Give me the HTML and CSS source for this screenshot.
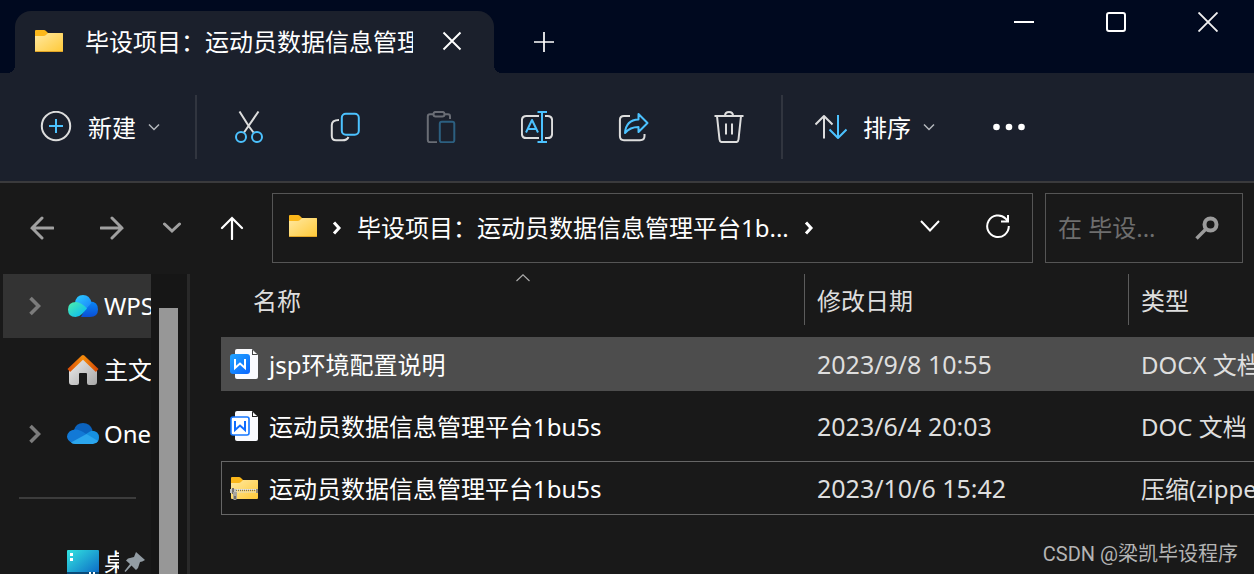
FILE: index.html
```html
<!DOCTYPE html>
<html lang="zh-CN">
<head>
    <meta charset="UTF-8">
    <title>毕设项目</title>
    <meta name="viewport" content="width=device-width, initial-scale=1.0">
    <link rel="stylesheet" href="styles.css">
</head>
<body>
    <!-- shared shapes -->
    <svg class="defs" width="0" height="0" aria-hidden="true">
        <defs>
            <linearGradient id="gFolder" x1="0" y1="0" x2="1" y2="1">
                <stop offset="0" stop-color="#ffe9a2"/>
                <stop offset="1" stop-color="#ffc937"/>
            </linearGradient>
            <linearGradient id="gTeal" x1="0" y1="0" x2="1" y2="1">
                <stop offset="0" stop-color="#4ff0a8"/>
                <stop offset="1" stop-color="#00b4ff"/>
            </linearGradient>
            <linearGradient id="gSky" x1="0" y1="0" x2="1" y2="1">
                <stop offset="0" stop-color="#2cd0ff"/>
                <stop offset="1" stop-color="#1a7dfa"/>
            </linearGradient>
            <linearGradient id="gBlue" x1="0" y1="0" x2="0" y2="1">
                <stop offset="0" stop-color="#0a86f5"/>
                <stop offset="1" stop-color="#0a4fd6"/>
            </linearGradient>
            <linearGradient id="gRoof" x1="0" y1="0" x2="1" y2="0">
                <stop offset="0" stop-color="#dc5208"/>
                <stop offset="0.5" stop-color="#f58d0c"/>
                <stop offset="1" stop-color="#d64a06"/>
            </linearGradient>
            <linearGradient id="gHouse" x1="0" y1="0" x2="1" y2="1">
                <stop offset="0" stop-color="#f0f0f0"/>
                <stop offset="1" stop-color="#a8a8a8"/>
            </linearGradient>
            <linearGradient id="gDesk" x1="0" y1="0" x2="1" y2="1">
                <stop offset="0" stop-color="#32e4e0"/>
                <stop offset="1" stop-color="#0a63c4"/>
            </linearGradient>
            <linearGradient id="gWps" x1="0" y1="0" x2="1" y2="1">
                <stop offset="0" stop-color="#22a5ff"/>
                <stop offset="1" stop-color="#0a66ff"/>
            </linearGradient>
            <symbol id="folder" viewBox="0 0 28 24">
                <path d="M0 2Q0 1 1 1H9Q10 1 11 2L13 4H27Q28 4 28 5V10H0Z" fill="#fbb71a"/>
                <path d="M0 7H8.500Q10 7 11 6L13 4H27Q28 4 28 5V22Q28 23 27 23H1Q0 23 0 22Z" fill="url(#gFolder)"/>
                <path d="M0 21.500V22Q0 23 1 23H27Q28 23 28 22V21.500Q28 22 27 22H1Q0 22 0 21.500Z" fill="#e2a526"/>
            </symbol>
            <symbol id="chev-down" viewBox="0 0 12 8">
                <path d="M1 1.500L6 6.500L11 1.500" fill="none" stroke="#b5b8be" stroke-width="1.500"/>
            </symbol>
            <symbol id="chev-bold" viewBox="0 0 12 14">
                <path d="M3 1.500L8 7L3 12.500" fill="none" stroke="#fff" stroke-width="3"/>
            </symbol>
            <symbol id="chev-tree" viewBox="0 0 14 20">
                <path d="M3.500 2L11.500 10L3.500 18" fill="none" stroke="#7c7c7c" stroke-width="3.600"/>
            </symbol>
        </defs>
    </svg>

    <header class="titlebar">
        <div class="tab">
            <svg class="folder" aria-hidden="true"><use href="#folder"/></svg>
            <span class="tab-title">毕设项目：运动员数据信息管理平台1bu5s</span>
            <button class="tab-close" aria-label="关闭标签页">
                <svg width="20" height="20" viewBox="0 0 20 20"><path d="M1.500 1.500L18.500 18.500M18.500 1.500L1.500 18.500" fill="none" stroke="#fff" stroke-width="1.900"/></svg>
            </button>
        </div>
        <button class="tab-add" aria-label="新标签页">
            <svg width="20" height="20" viewBox="0 0 20 20"><path d="M10 0V20M0 10H20" fill="none" stroke="#fff" stroke-width="1.700"/></svg>
        </button>
        <div class="window-buttons">
            <button aria-label="最小化"><svg width="20" height="20" viewBox="0 0 20 20"><path d="M0 10H20" stroke="#fff" stroke-width="2"/></svg></button>
            <button aria-label="最大化"><svg width="20" height="20" viewBox="0 0 20 20"><rect x="1" y="1" width="18" height="18" rx="2" fill="none" stroke="#fff" stroke-width="2"/></svg></button>
            <button aria-label="关闭"><svg width="20" height="20" viewBox="0 0 20 20"><path d="M0.500 0.500L19.500 19.500M19.500 0.500L0.500 19.500" fill="none" stroke="#f0f0f0" stroke-width="1.900"/></svg></button>
        </div>
    </header>

    <div class="toolbar">
        <button class="tool-text">
            <svg class="tool-icon" viewBox="0 0 32 32" aria-hidden="true">
                <circle cx="16" cy="15" r="14.200" stroke="#ddd"/>
                <path d="M16 8V22M9 15H23" stroke="#4cc2ff"/>
            </svg>
            <span class="tool-label">新建</span>
            <svg class="chev" aria-hidden="true"><use href="#chev-down"/></svg>
        </button>
        <span class="divider"></span>
        <button class="tool" aria-label="剪切">
            <svg class="tool-icon" viewBox="0 0 32 32">
                <path d="M6.500 0.500L16 15.500L20.500 21.500M25.500 0.500L11 21.500" stroke="#ddd"/>
                <circle cx="8" cy="26" r="5" stroke="#4cc2ff"/>
                <circle cx="24" cy="26" r="5" stroke="#4cc2ff"/>
            </svg>
        </button>
        <button class="tool" aria-label="复制">
            <svg class="tool-icon" viewBox="0 0 32 32">
                <path d="M10 9Q2.800 9 2.800 14V25Q2.800 29.300 7 29.300H13.500Q18 29.300 19.500 26" stroke="#ddd"/>
                <rect x="12.800" y="2.800" width="17" height="21" rx="4" stroke="#4cc2ff"/>
            </svg>
        </button>
        <button class="tool disabled" aria-label="粘贴" disabled>
            <svg class="tool-icon" viewBox="0 0 32 32">
                <path d="M8 3.200H5Q2.800 3.200 2.800 5.500V29Q2.800 31.200 5 31.200H12M19 3.200H23Q25 3.200 25 5.500V8" stroke="#6a6d75"/>
                <rect x="8.500" y="0.900" width="11" height="4.500" rx="2.200" stroke="#6a6d75"/>
                <rect x="14.800" y="10.800" width="14.500" height="20.400" rx="2" stroke="#2c5f80"/>
            </svg>
        </button>
        <button class="tool" aria-label="重命名">
            <svg class="tool-icon" viewBox="0 0 32 32">
                <path d="M18 4.900H5.500Q0.900 4.900 0.900 9.500V22.500Q0.900 27.100 5.500 27.100H18M24 4.900H26.500Q31.100 4.900 31.100 9.500V22.500Q31.100 27.100 26.500 27.100H24" stroke="#ddd"/>
                <path d="M21 1V31M16.500 0.900H26M16.500 31.100H26M5 21.500L11 9L17 21.500M7.500 18H14.500" stroke="#4cc2ff"/>
            </svg>
        </button>
        <button class="tool" aria-label="共享">
            <svg class="tool-icon" viewBox="0 0 32 32">
                <path d="M13 4.900H7Q2.900 4.900 2.900 9V25Q2.900 29.200 7 29.200H23Q27.500 29.200 27.500 25V23" stroke="#ddd"/>
                <path d="M21.500 3L30.500 12L21.500 21V16Q13 16 8 22Q9 9 21.500 8.500Z" stroke="#4cc2ff"/>
            </svg>
        </button>
        <button class="tool" aria-label="删除">
            <svg class="tool-icon" viewBox="0 0 32 32">
                <path d="M1.500 5H30.500M12 5Q12 1 16 1T20 5M4 5L6.500 28.500Q6.800 31.100 9 31.100H23Q25.200 31.100 25.500 28.500L28 5M13 12.500V23.500M19 12.500V23.500" stroke="#ddd"/>
            </svg>
        </button>
        <span class="divider"></span>
        <button class="tool-text sort">
            <svg class="tool-icon" viewBox="0 0 32 32" aria-hidden="true">
                <path d="M9 27.500V5M0.500 13.500L9 5L17.500 13.500" stroke="#ddd"/>
                <path d="M23 4V27M14.500 18.500L23 27L31.500 18.500" stroke="#4cc2ff"/>
            </svg>
            <span class="tool-label">排序</span>
            <svg class="chev" aria-hidden="true"><use href="#chev-down"/></svg>
        </button>
        <button class="tool more" aria-label="查看更多">
            <svg width="32" height="8" viewBox="0 0 32 8"><circle cx="3.500" cy="4" r="3.300" fill="#fff"/><circle cx="16" cy="4" r="3.300" fill="#fff"/><circle cx="28.500" cy="4" r="3.300" fill="#fff"/></svg>
        </button>
    </div>

    <div class="navbar">
        <button class="nav-btn" aria-label="后退">
            <svg width="24" height="24" viewBox="0 0 24 24"><path d="M23 12H2M12 2L2 12L12 22" fill="none" stroke="#a0a0a0" stroke-width="3" stroke-linecap="round"/></svg>
        </button>
        <button class="nav-btn" aria-label="前进">
            <svg width="24" height="24" viewBox="0 0 24 24"><path d="M1 12H22M12 2L22 12L12 22" fill="none" stroke="#a0a0a0" stroke-width="3" stroke-linecap="round"/></svg>
        </button>
        <button class="nav-btn recent" aria-label="最近浏览的位置">
            <svg width="18" height="12" viewBox="0 0 18 12"><path d="M1.500 2L9 9L16.500 2" fill="none" stroke="#a0a0a0" stroke-width="3" stroke-linecap="round"/></svg>
        </button>
        <button class="nav-btn" aria-label="上移">
            <svg width="24" height="24" viewBox="0 0 24 24"><path d="M12 23V2M2 12L12 2L22 12" fill="none" stroke="#fff" stroke-width="2.200" stroke-linecap="round"/></svg>
        </button>
        <div class="address">
            <svg class="folder" aria-hidden="true"><use href="#folder"/></svg>
            <svg class="crumb-chev" aria-hidden="true"><use href="#chev-bold"/></svg>
            <a class="crumb" href="#">毕设项目：运动员数据信息管理平台1b...</a>
            <svg class="crumb-chev" aria-hidden="true"><use href="#chev-bold"/></svg>
            <div class="address-actions">
                <button aria-label="以前的位置">
                    <svg width="20" height="14" viewBox="0 0 20 14"><path d="M1 2L10 11.500L19 2" fill="none" stroke="#fff" stroke-width="2"/></svg>
                </button>
                <button aria-label="刷新">
                    <svg width="24" height="28" viewBox="0 0 24 28"><path d="M22.800 14A10.800 10.800 0 1 1 19.500 6.500L22 9M22 3V9.500H15" fill="none" stroke="#fff" stroke-width="2"/></svg>
                </button>
            </div>
        </div>
        <div class="search">
            <input type="search" placeholder="在 毕设..." aria-label="搜索">
            <svg width="24" height="24" viewBox="0 0 24 24" aria-hidden="true"><circle cx="15.500" cy="8.500" r="6" fill="none" stroke="#9c9c9c" stroke-width="4"/><path d="M11 13L1.500 22.500" stroke="#9c9c9c" stroke-width="3.400"/></svg>
        </div>
    </div>

    <div class="content">
        <nav class="sidebar">
            <ul class="tree">
                <li class="tree-item active">
                    <svg class="tree-chev" aria-hidden="true"><use href="#chev-tree"/></svg>
                    <svg class="tree-icon" viewBox="0 0 32 32" aria-hidden="true">
                        <path d="M14 27L22 11.500Q31 11 31 19.500Q31 27 23 27Z" fill="url(#gBlue)"/>
                        <path d="M8 13Q9 5 16 5Q23 5 24.500 13L18 20Z" fill="url(#gSky)"/>
                        <path d="M1 19.500Q1 12 9 12Q14 12 20 18.500L15 24Q12 27 8.500 27Q1 27 1 19.500Z" fill="url(#gTeal)"/>
                    </svg>
                    <a href="#">WPS云盘</a>
                </li>
                <li class="tree-item">
                    <span class="tree-chev"></span>
                    <svg class="tree-icon" viewBox="0 0 32 32" aria-hidden="true">
                        <path d="M2 16L16 3L30 16V28Q30 31 27 31H22Q20 31 20 29V20Q20 19 19 19H13Q12 19 12 20V29Q12 31 10 31H5Q2 31 2 28Z" fill="url(#gHouse)"/>
                        <path d="M1.800 16.500L16 3L30.200 16.500" fill="none" stroke="url(#gRoof)" stroke-width="3.800" stroke-linejoin="round"/>
                    </svg>
                    <a href="#">主文件夹</a>
                </li>
                <li class="tree-item">
                    <svg class="tree-chev" aria-hidden="true"><use href="#chev-tree"/></svg>
                    <svg class="tree-icon" viewBox="0 0 32 32" aria-hidden="true">
                        <path d="M7 12Q9 5 16 5Q23 5 25.500 12L16 20Z" fill="#0b62bd"/>
                        <path d="M8 11.500Q12 11 20 16.500L5 25Q0 22 0 18.500Q1 12 8 11.500Z" fill="#1279d6"/>
                        <path d="M19 16L24.500 12.500Q32 13 32 19.500Q32 23 29 25Z" fill="#1690e0"/>
                        <path d="M4 24.500L19.500 16L31 23Q29 26 26 26H8Q5.500 26 4 24.500Z" fill="#2ba6ee"/>
                    </svg>
                    <a href="#">OneDrive</a>
                </li>
                <li class="tree-sep"></li>
                <li class="tree-item">
                    <span class="tree-chev"></span>
                    <svg class="tree-icon" viewBox="0 0 32 32" aria-hidden="true">
                        <path d="M1 4H31Q32 4 32 5V30H0V5Q0 4 1 4Z" fill="url(#gDesk)"/>
                        <path d="M0 26H32V30H0Z" fill="#0a4a78"/>
                        <path d="M3 7H6V10H3ZM3 12H6V15H3ZM22 26H24V29H22ZM26 26H28V29H26Z" fill="#fff"/>
                    </svg>
                    <a class="short" href="#">桌面</a>
                    <svg class="pin" width="22" height="22" viewBox="0 0 22 22" aria-hidden="true"><path d="M12 1L21 9Q18 11 16 11L14 17L12 19L7.500 14.500L1.500 21L0.500 20L6 13L2 9.500L4 7.500L10 6Z" fill="#929ca3"/></svg>
                </li>
            </ul>
            <div class="scrollbar"><div class="thumb"></div></div>
        </nav>

        <main class="files">
            <table>
                <colgroup>
                    <col class="col-name">
                    <col class="col-date">
                    <col>
                </colgroup>
                <thead>
                    <tr>
                        <th class="th-name">
                            <svg class="sort-caret" width="14" height="8" viewBox="0 0 14 8" aria-hidden="true"><path d="M0.500 7L7 0.800L13.500 7" fill="none" stroke="#aaa" stroke-width="1.200"/></svg>
                            名称
                        </th>
                        <th>修改日期</th>
                        <th>类型</th>
                    </tr>
                </thead>
                <tbody>
                    <tr class="selected">
                        <td>
                            <div class="file">
                                <svg class="file-icon" viewBox="0 0 28 32" aria-hidden="true">
                                    <path d="M7 1H22L28 7V29Q28 31 26 31H7Q5 31 5 29V3Q5 1 7 1Z" fill="#fafbff"/>
                                    <path d="M22 1V7H28Z" fill="#444"/><path d="M23 2.500V6H27Z" fill="#fff"/>
                                    <rect x="0" y="6" width="20" height="20" rx="3" fill="url(#gWps)"/>
                                    <path d="M5 11V20L10 15.500L15 20V11" fill="none" stroke="#fff" stroke-width="2"/>
                                </svg>
                                <span class="file-name">jsp环境配置说明</span>
                            </div>
                        </td>
                        <td class="meta">2023/9/8 10:55</td>
                        <td class="kind">DOCX 文档</td>
                    </tr>
                    <tr>
                        <td>
                            <div class="file">
                                <svg class="file-icon" viewBox="0 0 28 32" aria-hidden="true">
                                    <path d="M7 1H22L28 7V29Q28 31 26 31H7Q5 31 5 29V3Q5 1 7 1Z" fill="#fafbff"/>
                                    <path d="M22 1V7H28Z" fill="#222"/><path d="M23 2.500V6H27Z" fill="#fff"/>
                                    <rect x="1" y="7" width="18" height="18" rx="2" fill="#fff" stroke="#1677ff" stroke-width="1.600"/>
                                    <path d="M5 11V20L10 15.500L15 20V11" fill="none" stroke="#0f6cff" stroke-width="2"/>
                                </svg>
                                <span class="file-name">运动员数据信息管理平台1bu5s</span>
                            </div>
                        </td>
                        <td class="meta">2023/6/4 20:03</td>
                        <td class="kind">DOC 文档</td>
                    </tr>
                    <tr class="focused">
                        <td>
                            <div class="file">
                                <svg class="file-icon" viewBox="0 0 28 32" aria-hidden="true">
                                    <path d="M1 6Q1 5 2 5H9Q10 5 11 6L13 8H27Q28 8 28 9V14H1Z" fill="#fbb71a"/>
                                    <path d="M1 11H8.500Q10 11 11 10L13 8H27Q28 8 28 9V26Q28 27 27 27H2Q1 27 1 26Z" fill="url(#gFolder)"/>
                                    <path d="M6 17.500H28" stroke="#e8e4d8" stroke-width="1"/>
                                    <path d="M6 18.500H28" stroke="#7b745f" stroke-width="1.600" stroke-dasharray="1 1"/>
                                    <path d="M6 20H28" stroke="#e8dfc0" stroke-width="1"/>
                                    <path d="M26 17H28V21H26Z" fill="#8e8a80"/>
                                    <path d="M0 17H6V21H0Z" fill="#c4c4c4"/>
                                    <path d="M2 16H4V22H2Z" fill="#77716a"/>
                                    <path d="M3 20H7V27L5.500 28H4L3 27Z" fill="#aaa59c"/>
                                    <path d="M4.500 24H5.500V27H4.500Z" fill="#3a3428"/>
                                </svg>
                                <span class="file-name">运动员数据信息管理平台1bu5s</span>
                            </div>
                        </td>
                        <td class="meta">2023/10/6 15:42</td>
                        <td class="kind">压缩(zipped)文件夹</td>
                    </tr>
                </tbody>
            </table>
        </main>
    </div>

    <div class="watermark">CSDN @梁凯毕设程序</div>
</body>
</html>
```
FILE: styles.css
```css
:root {
    --title-bg: #00091f;
    --tool-bg: #1b202c;
    --bg: #191919;
    --border: #555;
    --text: #fff;
    --muted: #dedede;
}
* {
    box-sizing: border-box;
}
body {
    margin: 0;
    height: 100vh;
    display: flex;
    flex-direction: column;
    overflow: hidden;
    position: relative;
    background: var(--bg);
    color: var(--text);
    font-family: 'Noto Sans', 'Noto Sans CJK SC', sans-serif;
    font-size: 24px;
    line-height: 32px;
}
button {
    display: flex;
    align-items: center;
    justify-content: center;
    padding: 0;
    border: none;
    background: none;
    color: inherit;
    font: inherit;
    cursor: pointer;
}
a {
    color: inherit;
    text-decoration: none;
}
svg {
    flex: none;
}
.defs {
    position: absolute;
}
.folder {
    width: 28px;
    height: 24px;
}

/* title bar */
.titlebar {
    flex: none;
    display: flex;
    height: 73px;
    padding: 11px 0 0 15px;
    background: var(--title-bg);
}
.tab {
    position: relative;
    display: flex;
    align-items: center;
    width: 479px;
    padding: 0 32px 2px 20px;
    border-radius: 16px 16px 0 0;
    background: var(--tool-bg);
}
.tab::before,
.tab::after {
    content: "";
    position: absolute;
    bottom: 0;
    width: 8px;
    height: 8px;
}
.tab::before {
    right: 100%;
    background: radial-gradient(circle at 0 0, transparent 8px, var(--tool-bg) 8px);
}
.tab::after {
    left: 100%;
    background: radial-gradient(circle at 100% 0, transparent 8px, var(--tool-bg) 8px);
}
.tab-title {
    flex: 1;
    margin: 0 29px 0 22px;
    padding-top: 2px;
    overflow: hidden;
    white-space: nowrap;
}
.tab-close {
    height: 32px;
}
.tab-add {
    width: 100px;
}
.window-buttons {
    display: flex;
    margin: -11px 0 0 auto;
    height: 44px;
}
.window-buttons button {
    width: 92px;
}

/* command bar */
.toolbar {
    flex: none;
    display: flex;
    align-items: center;
    height: 110px;
    border-bottom: 2px solid #3a3a3c;
    background: var(--tool-bg);
}
.tool-icon {
    width: 32px;
    height: 32px;
    fill: none;
    stroke-width: 2;
    stroke-linejoin: round;
}
.tool-text {
    gap: 16px;
    padding: 0 35px 0 40px;
    white-space: nowrap;
}
.tool-text.sort {
    padding: 0 10px 0 28px;
}
.tool-label {
    padding-top: 2px;
}
.chev {
    width: 12px;
    height: 8px;
    margin-left: -4px;
}
.tool {
    width: 96px;
    height: 64px;
}
.tool.more {
    margin-left: 16px;
}
.divider {
    width: 2px;
    height: 64px;
    margin-right: 4px;
    background: #31353f;
}
.tool + .divider {
    margin-left: 4px;
}

/* address row */
.navbar {
    flex: none;
    display: flex;
    align-items: center;
    height: 91px;
    padding: 0 11px 1px 7px;
}
.nav-btn {
    width: 70px;
    height: 48px;
}
.nav-btn.recent {
    width: 50px;
}
.address {
    flex: 1;
    display: flex;
    align-items: center;
    gap: 14px;
    height: 70px;
    margin: 0 12px 0 5px;
    padding-left: 16px;
    border: 1px solid var(--border);
    white-space: nowrap;
}
.address .folder {
    margin-bottom: 4px;
}
.crumb-chev {
    width: 12px;
    height: 14px;
}
.address-actions {
    display: flex;
    margin-left: auto;
}
.address-actions button {
    width: 68px;
    height: 68px;
    padding-bottom: 4px;
}
.search {
    display: flex;
    align-items: center;
    width: 198px;
    height: 70px;
    padding: 0 23px 0 12px;
    border: 1px solid var(--border);
}
.search input {
    flex: 1;
    min-width: 0;
    padding: 0;
    border: none;
    outline: none;
    background: none;
    color: var(--text);
    font: inherit;
}
.search input::placeholder {
    color: #6e6e6e;
}

/* folder tree */
.content {
    flex: 1;
    display: flex;
    min-height: 0;
}
.sidebar {
    flex: none;
    display: flex;
    width: 190px;
    padding-left: 3px;
    border-right: 3px solid #292929;
    overflow: hidden;
}
.tree {
    width: 148px;
    margin: 0;
    padding: 0;
    list-style: none;
}
.tree-item {
    display: flex;
    align-items: center;
    height: 64px;
    padding-left: 24px;
}
.tree-item.active {
    background: #333;
}
.tree-chev {
    flex: none;
    width: 14px;
    height: 20px;
    margin-right: 26px;
}
.tree-icon {
    width: 32px;
    height: 32px;
    margin-right: 5px;
}
.tree-item a {
    flex: 1;
    overflow: hidden;
    white-space: nowrap;
}
.tree-item a.short {
    flex: none;
    width: 15px;
}
.pin {
    margin-left: 5px;
}
.tree-sep {
    height: 64px;
    padding: 31px 15px 31px 16px;
    background: #3c3c3c content-box;
}
.scrollbar {
    width: 36px;
    padding: 34px 9px 0 8px;
    background: #161616;
}
.thumb {
    height: 100%;
    background: #979797;
}

/* file list */
.files {
    flex: 1;
    min-width: 0;
    padding-left: 31px;
    overflow: hidden;
}
table {
    width: 100%;
    margin-top: -8px;
    table-layout: fixed;
    border-spacing: 0 8px;
}
.col-name {
    width: 583px;
}
.col-date {
    width: 324px;
}
th,
td {
    padding: 0 0 0 13px;
    overflow: hidden;
    text-align: left;
    white-space: nowrap;
}
th {
    height: 55px;
    padding-bottom: 2px;
    background: linear-gradient(#5c5c5c, #5c5c5c) no-repeat left top / 1px 51px;
    color: var(--muted);
    font-weight: normal;
}
.th-name {
    position: relative;
    padding-left: 32px;
    background: none;
}
.sort-caret {
    position: absolute;
    top: 0;
    left: 20px;
    right: 0;
    margin: 0 auto;
}
td {
    height: 54px;
    border: 1px solid transparent;
    border-width: 1px 0;
}
td:first-child {
    padding-left: 9px;
}
.file {
    display: flex;
    align-items: center;
    gap: 11px;
}
.file-icon {
    width: 28px;
    height: 32px;
}
.file-name {
    padding-top: 2px;
}
.meta {
    color: var(--muted);
    font-size: 25px;
}
.kind {
    padding-top: 2px;
    color: var(--muted);
}
.selected td {
    background: #4d4d4d;
    border-color: #4d4d4d;
}
.focused td {
    border-color: #666;
}
.focused td:first-child {
    border-left-width: 1px;
    padding-left: 8px;
}

.watermark {
    position: absolute;
    right: 16px;
    bottom: 4px;
    color: #b4b4b4;
    font-family: Roboto, 'Noto Sans CJK SC', sans-serif;
    font-size: 20px;
}
```
